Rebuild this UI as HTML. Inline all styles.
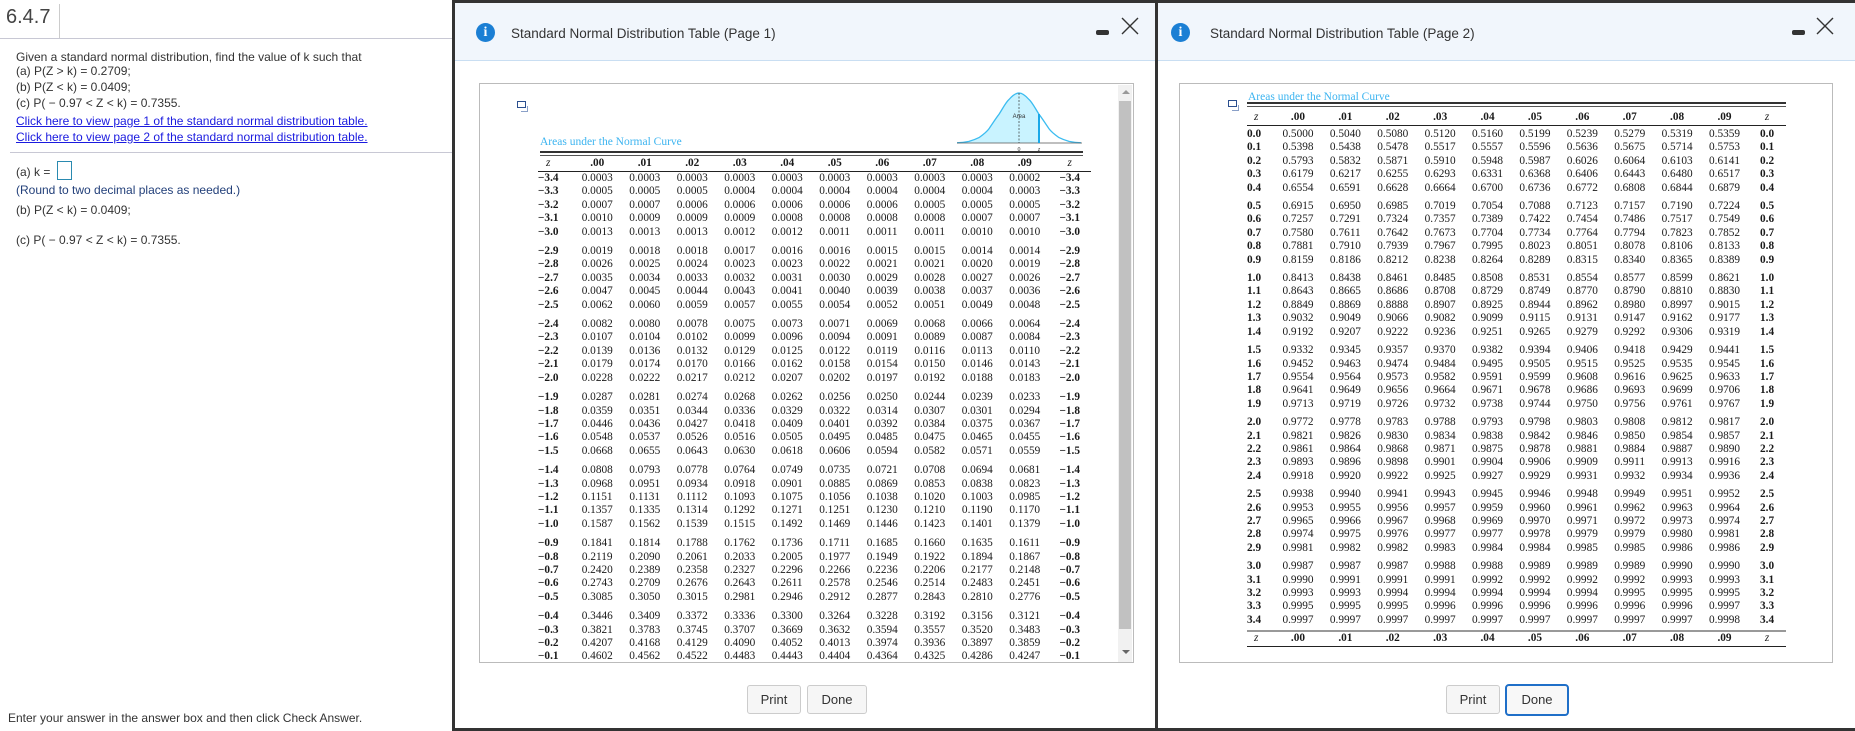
<!DOCTYPE html>
<html><head><meta charset="utf-8">
<style>
*{box-sizing:border-box;margin:0;padding:0}
body{width:1855px;height:731px;overflow:hidden;background:#fff;position:relative;font-family:"Liberation Sans",Arial,sans-serif;color:#333}
.abs{position:absolute}
.lt{position:absolute;left:16px;font-size:12px;line-height:16px;color:#333;white-space:nowrap}
a{color:#1a1adf;text-decoration:underline}
.dlg{position:absolute;top:0;height:731px;background:#fff;border:3px solid #333}
.tb{position:absolute;left:0;right:0;top:0;height:58px;background:#f1f6fc;border-bottom:1px solid #c9def2}
.ic{position:absolute;width:19px;height:19px;border-radius:50%;background:#1b7fd4;color:#fff;font:bold 14px/19px "Liberation Serif",serif;text-align:center}
.tt{position:absolute;font-size:13.5px;color:#333;white-space:nowrap}
.mn{position:absolute;width:13px;height:5px;border-radius:2px;background:#333}
.box{position:absolute;border:1px solid #bbb;background:#fff;overflow:hidden}
.btn{position:absolute;height:29px;background:#f6f6f6;border:1px solid #ccc;border-radius:3px;font-size:13px;line-height:27px;text-align:center;color:#333}
table{position:absolute;border-collapse:collapse;table-layout:fixed;font-family:"Liberation Serif","DejaVu Serif",serif;font-size:11.3px;color:#1a1a1a}
td{height:13.4px;padding:0;line-height:13.4px;text-align:center;white-space:nowrap}
tr.g td{padding-top:5px;height:18.4px;line-height:13.4px;vertical-align:bottom}
.p1 tr.g td{padding-top:6px;height:19.4px}
td.z{font-weight:bold;text-align:left}
td.zr{font-weight:bold}
tr.h td{font-weight:bold;height:15px;border-bottom:1px solid #222}
tr.h td.i{font-weight:normal;font-style:italic}
.cp{position:absolute;width:9px;height:7px;border:1.5px solid #2b4f8f}
.cp2{position:absolute;width:7px;height:6px;border:1px solid #8aa0c8;border-top:none;border-left:none}
.ar{position:absolute;font-family:"Liberation Serif",serif;font-size:11.5px;color:#3cb4f0;white-space:nowrap}
</style></head><body>

<!-- left panel -->
<div class="abs" style="left:6px;top:6px;font-size:20px;color:#444">6.4.7</div>
<div class="abs" style="left:59px;top:4px;width:1px;height:34px;background:#ccc"></div>
<div class="abs" style="left:0;top:38px;width:455px;height:1px;background:#c8c8d4"></div>
<div class="lt" style="top:49px">Given a standard normal distribution, find the value of k such that</div>
<div class="lt" style="top:63px">(a) P(Z &gt; k) = 0.2709;</div>
<div class="lt" style="top:79px">(b) P(Z &lt; k) = 0.0409;</div>
<div class="lt" style="top:95px">(c) P( − 0.97 &lt; Z &lt; k) = 0.7355.</div>
<div class="lt" style="top:113px"><a>Click here to view page 1 of the standard normal distribution table.</a></div>
<div class="lt" style="top:129px"><a>Click here to view page 2 of the standard normal distribution table.</a></div>
<div class="abs" style="left:10px;top:152px;width:445px;height:1px;background:#c8c8d4"></div>
<div class="lt" style="top:164px">(a) k =</div>
<div class="abs" style="left:57px;top:161px;width:15px;height:19px;border:1px solid #2a8ab0"></div>
<div class="lt" style="top:182px;color:#23407a">(Round to two decimal places as needed.)</div>
<div class="lt" style="top:202px">(b) P(Z &lt; k) = 0.0409;</div>
<div class="lt" style="top:232px">(c) P( − 0.97 &lt; Z &lt; k) = 0.7355.</div>
<div class="lt" style="top:710px;left:8px">Enter your answer in the answer box and then click Check Answer.</div>

<!-- dialog 1 -->
<div class="dlg" style="left:452px;width:706px;border-right:none">
 <div class="tb"></div>
 <div class="ic" style="left:21px;top:20px">i</div>
 <div class="tt" style="left:56px;top:23px">Standard Normal Distribution Table (Page 1)</div>
 <div class="mn" style="left:641px;top:27px"></div>
 <svg class="abs" style="left:666px;top:14px" width="18" height="18"><path d="M1,1 L17,17 M17,1 L1,17" stroke="#333" stroke-width="1.4"/></svg>
</div>
<div class="box" style="left:479px;top:83px;width:655px;height:580px">
 <div class="cp" style="left:37px;top:17px"></div><div class="cp2" style="left:41px;top:22px"></div>
 <div class="abs" style="left:638px;top:1px;width:14px;height:577px;background:#f1f1f1"></div>
 <div class="abs" style="left:639px;top:17px;width:12px;height:528px;background:#c1c1c1"></div>
 <div class="abs" style="left:642px;top:6px;width:0;height:0;border-left:4px solid transparent;border-right:4px solid transparent;border-bottom:4px solid #999"></div>
 <div class="abs" style="left:642px;top:566px;width:0;height:0;border-left:4px solid transparent;border-right:4px solid transparent;border-top:4px solid #666"></div>
</div>
<svg class="abs" style="left:950px;top:85px" width="140" height="70" viewBox="0 0 140 70">
 <path d="M7,57.8 C13,57.6 17,56.8 19,56.4 C24,55 27,53.6 29,52.6 C34,49 37,46.5 39,43.7 C43,38 46,33 49,29.3 C53,23 56,17 59,14.5 C63,10 66,8 69,8 C72,8 75,10 79,14.5 C82,17 85,23 89,29.3 L89,58 L7,58 Z" fill="#c9f3ff"/>
 <path d="M7,57.8 C13,57.6 17,56.8 19,56.4 C24,55 27,53.6 29,52.6 C34,49 37,46.5 39,43.7 C43,38 46,33 49,29.3 C53,23 56,17 59,14.5 C63,10 66,8 69,8 C72,8 75,10 79,14.5 C82,17 85,23 89,29.3 C92,33 95,38 99,43.7 C101,46.5 104,49 109,52.6 C111,53.6 114,55 119,56.4 C121,56.8 125,57.6 131,57.8" fill="none" stroke="#3bbcf0" stroke-width="1.3"/>
 <line x1="7" y1="58" x2="132" y2="58" stroke="#555" stroke-width="0.8"/>
 <line x1="69" y1="8" x2="69" y2="58" stroke="#333" stroke-width="0.7" stroke-dasharray="2,1.5"/>
 <line x1="89" y1="29" x2="89" y2="58" stroke="#1aa8e8" stroke-width="2"/>
 <text x="69" y="33" font-size="6" text-anchor="middle" fill="#333" font-family="Liberation Sans">Area</text>
 <text x="69" y="66" font-size="6" text-anchor="middle" fill="#333" font-family="Liberation Serif">0</text>
 <text x="89" y="66" font-size="6" text-anchor="middle" fill="#333" font-style="italic" font-family="Liberation Serif">z</text>
</svg>
<div class="ar" style="left:540px;top:136px">Areas under the Normal Curve</div>
<div class="abs" style="left:540px;top:151px;width:543px;height:2px;background:#333"></div>
<div class="abs" style="left:540px;top:155px;width:543px;height:1px;background:#555"></div>
<table class="p1" style="left:538px;top:156px;width:553px">
<colgroup><col style="width:35.5px"><col style="width:47.5px"><col style="width:47.5px"><col style="width:47.5px"><col style="width:47.5px"><col style="width:47.5px"><col style="width:47.5px"><col style="width:47.5px"><col style="width:47.5px"><col style="width:47.5px"><col style="width:47.5px"><col style="width:42.5px"></colgroup>
<tr class="h"><td class="i" style="text-align:left;padding-left:8px">z</td><td>.00</td><td>.01</td><td>.02</td><td>.03</td><td>.04</td><td>.05</td><td>.06</td><td>.07</td><td>.08</td><td>.09</td><td class="i">z</td></tr>
<tr style="height:1px"><td colspan="12" style="height:1px"></td></tr>
<tr><td class="z">−3.4</td><td>0.0003</td><td>0.0003</td><td>0.0003</td><td>0.0003</td><td>0.0003</td><td>0.0003</td><td>0.0003</td><td>0.0003</td><td>0.0003</td><td>0.0002</td><td class="zr">−3.4</td></tr>
<tr><td class="z">−3.3</td><td>0.0005</td><td>0.0005</td><td>0.0005</td><td>0.0004</td><td>0.0004</td><td>0.0004</td><td>0.0004</td><td>0.0004</td><td>0.0004</td><td>0.0003</td><td class="zr">−3.3</td></tr>
<tr><td class="z">−3.2</td><td>0.0007</td><td>0.0007</td><td>0.0006</td><td>0.0006</td><td>0.0006</td><td>0.0006</td><td>0.0006</td><td>0.0005</td><td>0.0005</td><td>0.0005</td><td class="zr">−3.2</td></tr>
<tr><td class="z">−3.1</td><td>0.0010</td><td>0.0009</td><td>0.0009</td><td>0.0009</td><td>0.0008</td><td>0.0008</td><td>0.0008</td><td>0.0008</td><td>0.0007</td><td>0.0007</td><td class="zr">−3.1</td></tr>
<tr><td class="z">−3.0</td><td>0.0013</td><td>0.0013</td><td>0.0013</td><td>0.0012</td><td>0.0012</td><td>0.0011</td><td>0.0011</td><td>0.0011</td><td>0.0010</td><td>0.0010</td><td class="zr">−3.0</td></tr>
<tr class="g"><td class="z">−2.9</td><td>0.0019</td><td>0.0018</td><td>0.0018</td><td>0.0017</td><td>0.0016</td><td>0.0016</td><td>0.0015</td><td>0.0015</td><td>0.0014</td><td>0.0014</td><td class="zr">−2.9</td></tr>
<tr><td class="z">−2.8</td><td>0.0026</td><td>0.0025</td><td>0.0024</td><td>0.0023</td><td>0.0023</td><td>0.0022</td><td>0.0021</td><td>0.0021</td><td>0.0020</td><td>0.0019</td><td class="zr">−2.8</td></tr>
<tr><td class="z">−2.7</td><td>0.0035</td><td>0.0034</td><td>0.0033</td><td>0.0032</td><td>0.0031</td><td>0.0030</td><td>0.0029</td><td>0.0028</td><td>0.0027</td><td>0.0026</td><td class="zr">−2.7</td></tr>
<tr><td class="z">−2.6</td><td>0.0047</td><td>0.0045</td><td>0.0044</td><td>0.0043</td><td>0.0041</td><td>0.0040</td><td>0.0039</td><td>0.0038</td><td>0.0037</td><td>0.0036</td><td class="zr">−2.6</td></tr>
<tr><td class="z">−2.5</td><td>0.0062</td><td>0.0060</td><td>0.0059</td><td>0.0057</td><td>0.0055</td><td>0.0054</td><td>0.0052</td><td>0.0051</td><td>0.0049</td><td>0.0048</td><td class="zr">−2.5</td></tr>
<tr class="g"><td class="z">−2.4</td><td>0.0082</td><td>0.0080</td><td>0.0078</td><td>0.0075</td><td>0.0073</td><td>0.0071</td><td>0.0069</td><td>0.0068</td><td>0.0066</td><td>0.0064</td><td class="zr">−2.4</td></tr>
<tr><td class="z">−2.3</td><td>0.0107</td><td>0.0104</td><td>0.0102</td><td>0.0099</td><td>0.0096</td><td>0.0094</td><td>0.0091</td><td>0.0089</td><td>0.0087</td><td>0.0084</td><td class="zr">−2.3</td></tr>
<tr><td class="z">−2.2</td><td>0.0139</td><td>0.0136</td><td>0.0132</td><td>0.0129</td><td>0.0125</td><td>0.0122</td><td>0.0119</td><td>0.0116</td><td>0.0113</td><td>0.0110</td><td class="zr">−2.2</td></tr>
<tr><td class="z">−2.1</td><td>0.0179</td><td>0.0174</td><td>0.0170</td><td>0.0166</td><td>0.0162</td><td>0.0158</td><td>0.0154</td><td>0.0150</td><td>0.0146</td><td>0.0143</td><td class="zr">−2.1</td></tr>
<tr><td class="z">−2.0</td><td>0.0228</td><td>0.0222</td><td>0.0217</td><td>0.0212</td><td>0.0207</td><td>0.0202</td><td>0.0197</td><td>0.0192</td><td>0.0188</td><td>0.0183</td><td class="zr">−2.0</td></tr>
<tr class="g"><td class="z">−1.9</td><td>0.0287</td><td>0.0281</td><td>0.0274</td><td>0.0268</td><td>0.0262</td><td>0.0256</td><td>0.0250</td><td>0.0244</td><td>0.0239</td><td>0.0233</td><td class="zr">−1.9</td></tr>
<tr><td class="z">−1.8</td><td>0.0359</td><td>0.0351</td><td>0.0344</td><td>0.0336</td><td>0.0329</td><td>0.0322</td><td>0.0314</td><td>0.0307</td><td>0.0301</td><td>0.0294</td><td class="zr">−1.8</td></tr>
<tr><td class="z">−1.7</td><td>0.0446</td><td>0.0436</td><td>0.0427</td><td>0.0418</td><td>0.0409</td><td>0.0401</td><td>0.0392</td><td>0.0384</td><td>0.0375</td><td>0.0367</td><td class="zr">−1.7</td></tr>
<tr><td class="z">−1.6</td><td>0.0548</td><td>0.0537</td><td>0.0526</td><td>0.0516</td><td>0.0505</td><td>0.0495</td><td>0.0485</td><td>0.0475</td><td>0.0465</td><td>0.0455</td><td class="zr">−1.6</td></tr>
<tr><td class="z">−1.5</td><td>0.0668</td><td>0.0655</td><td>0.0643</td><td>0.0630</td><td>0.0618</td><td>0.0606</td><td>0.0594</td><td>0.0582</td><td>0.0571</td><td>0.0559</td><td class="zr">−1.5</td></tr>
<tr class="g"><td class="z">−1.4</td><td>0.0808</td><td>0.0793</td><td>0.0778</td><td>0.0764</td><td>0.0749</td><td>0.0735</td><td>0.0721</td><td>0.0708</td><td>0.0694</td><td>0.0681</td><td class="zr">−1.4</td></tr>
<tr><td class="z">−1.3</td><td>0.0968</td><td>0.0951</td><td>0.0934</td><td>0.0918</td><td>0.0901</td><td>0.0885</td><td>0.0869</td><td>0.0853</td><td>0.0838</td><td>0.0823</td><td class="zr">−1.3</td></tr>
<tr><td class="z">−1.2</td><td>0.1151</td><td>0.1131</td><td>0.1112</td><td>0.1093</td><td>0.1075</td><td>0.1056</td><td>0.1038</td><td>0.1020</td><td>0.1003</td><td>0.0985</td><td class="zr">−1.2</td></tr>
<tr><td class="z">−1.1</td><td>0.1357</td><td>0.1335</td><td>0.1314</td><td>0.1292</td><td>0.1271</td><td>0.1251</td><td>0.1230</td><td>0.1210</td><td>0.1190</td><td>0.1170</td><td class="zr">−1.1</td></tr>
<tr><td class="z">−1.0</td><td>0.1587</td><td>0.1562</td><td>0.1539</td><td>0.1515</td><td>0.1492</td><td>0.1469</td><td>0.1446</td><td>0.1423</td><td>0.1401</td><td>0.1379</td><td class="zr">−1.0</td></tr>
<tr class="g"><td class="z">−0.9</td><td>0.1841</td><td>0.1814</td><td>0.1788</td><td>0.1762</td><td>0.1736</td><td>0.1711</td><td>0.1685</td><td>0.1660</td><td>0.1635</td><td>0.1611</td><td class="zr">−0.9</td></tr>
<tr><td class="z">−0.8</td><td>0.2119</td><td>0.2090</td><td>0.2061</td><td>0.2033</td><td>0.2005</td><td>0.1977</td><td>0.1949</td><td>0.1922</td><td>0.1894</td><td>0.1867</td><td class="zr">−0.8</td></tr>
<tr><td class="z">−0.7</td><td>0.2420</td><td>0.2389</td><td>0.2358</td><td>0.2327</td><td>0.2296</td><td>0.2266</td><td>0.2236</td><td>0.2206</td><td>0.2177</td><td>0.2148</td><td class="zr">−0.7</td></tr>
<tr><td class="z">−0.6</td><td>0.2743</td><td>0.2709</td><td>0.2676</td><td>0.2643</td><td>0.2611</td><td>0.2578</td><td>0.2546</td><td>0.2514</td><td>0.2483</td><td>0.2451</td><td class="zr">−0.6</td></tr>
<tr><td class="z">−0.5</td><td>0.3085</td><td>0.3050</td><td>0.3015</td><td>0.2981</td><td>0.2946</td><td>0.2912</td><td>0.2877</td><td>0.2843</td><td>0.2810</td><td>0.2776</td><td class="zr">−0.5</td></tr>
<tr class="g"><td class="z">−0.4</td><td>0.3446</td><td>0.3409</td><td>0.3372</td><td>0.3336</td><td>0.3300</td><td>0.3264</td><td>0.3228</td><td>0.3192</td><td>0.3156</td><td>0.3121</td><td class="zr">−0.4</td></tr>
<tr><td class="z">−0.3</td><td>0.3821</td><td>0.3783</td><td>0.3745</td><td>0.3707</td><td>0.3669</td><td>0.3632</td><td>0.3594</td><td>0.3557</td><td>0.3520</td><td>0.3483</td><td class="zr">−0.3</td></tr>
<tr><td class="z">−0.2</td><td>0.4207</td><td>0.4168</td><td>0.4129</td><td>0.4090</td><td>0.4052</td><td>0.4013</td><td>0.3974</td><td>0.3936</td><td>0.3897</td><td>0.3859</td><td class="zr">−0.2</td></tr>
<tr><td class="z">−0.1</td><td>0.4602</td><td>0.4562</td><td>0.4522</td><td>0.4483</td><td>0.4443</td><td>0.4404</td><td>0.4364</td><td>0.4325</td><td>0.4286</td><td>0.4247</td><td class="zr">−0.1</td></tr>
</table>
<div class="btn" style="left:747px;top:685px;width:54px">Print</div>
<div class="btn" style="left:807px;top:685px;width:60px">Done</div>

<!-- dialog 2 -->
<div class="dlg" style="left:1155px;width:700px;border-right:none">
 <div class="tb"></div>
 <div class="ic" style="left:13px;top:20px">i</div>
 <div class="tt" style="left:52px;top:23px">Standard Normal Distribution Table (Page 2)</div>
 <div class="mn" style="left:634px;top:27px"></div>
 <svg class="abs" style="left:658px;top:14px" width="18" height="18"><path d="M1,1 L17,17 M17,1 L1,17" stroke="#333" stroke-width="1.4"/></svg>
</div>
<div class="box" style="left:1179px;top:83px;width:654px;height:580px">
 <div class="cp" style="left:48px;top:16px"></div><div class="cp2" style="left:52px;top:21px"></div>
</div>
<div class="ar" style="left:1248px;top:91px">Areas under the Normal Curve</div>
<div class="abs" style="left:1247px;top:102px;width:539px;height:2px;background:#333"></div>
<div class="abs" style="left:1247px;top:106px;width:539px;height:1px;background:#555"></div>
<table style="left:1247px;top:110px;width:539px">
<colgroup><col style="width:27.3px"><col style="width:47.4px"><col style="width:47.4px"><col style="width:47.4px"><col style="width:47.4px"><col style="width:47.4px"><col style="width:47.4px"><col style="width:47.4px"><col style="width:47.4px"><col style="width:47.4px"><col style="width:47.4px"><col style="width:37.7px"></colgroup>
<tr class="h"><td class="i" style="text-align:left;padding-left:7px">z</td><td>.00</td><td>.01</td><td>.02</td><td>.03</td><td>.04</td><td>.05</td><td>.06</td><td>.07</td><td>.08</td><td>.09</td><td class="i">z</td></tr>
<tr><td colspan="12" style="height:3px"></td></tr>
<tr><td class="z">0.0</td><td>0.5000</td><td>0.5040</td><td>0.5080</td><td>0.5120</td><td>0.5160</td><td>0.5199</td><td>0.5239</td><td>0.5279</td><td>0.5319</td><td>0.5359</td><td class="zr">0.0</td></tr>
<tr><td class="z">0.1</td><td>0.5398</td><td>0.5438</td><td>0.5478</td><td>0.5517</td><td>0.5557</td><td>0.5596</td><td>0.5636</td><td>0.5675</td><td>0.5714</td><td>0.5753</td><td class="zr">0.1</td></tr>
<tr><td class="z">0.2</td><td>0.5793</td><td>0.5832</td><td>0.5871</td><td>0.5910</td><td>0.5948</td><td>0.5987</td><td>0.6026</td><td>0.6064</td><td>0.6103</td><td>0.6141</td><td class="zr">0.2</td></tr>
<tr><td class="z">0.3</td><td>0.6179</td><td>0.6217</td><td>0.6255</td><td>0.6293</td><td>0.6331</td><td>0.6368</td><td>0.6406</td><td>0.6443</td><td>0.6480</td><td>0.6517</td><td class="zr">0.3</td></tr>
<tr><td class="z">0.4</td><td>0.6554</td><td>0.6591</td><td>0.6628</td><td>0.6664</td><td>0.6700</td><td>0.6736</td><td>0.6772</td><td>0.6808</td><td>0.6844</td><td>0.6879</td><td class="zr">0.4</td></tr>
<tr class="g"><td class="z">0.5</td><td>0.6915</td><td>0.6950</td><td>0.6985</td><td>0.7019</td><td>0.7054</td><td>0.7088</td><td>0.7123</td><td>0.7157</td><td>0.7190</td><td>0.7224</td><td class="zr">0.5</td></tr>
<tr><td class="z">0.6</td><td>0.7257</td><td>0.7291</td><td>0.7324</td><td>0.7357</td><td>0.7389</td><td>0.7422</td><td>0.7454</td><td>0.7486</td><td>0.7517</td><td>0.7549</td><td class="zr">0.6</td></tr>
<tr><td class="z">0.7</td><td>0.7580</td><td>0.7611</td><td>0.7642</td><td>0.7673</td><td>0.7704</td><td>0.7734</td><td>0.7764</td><td>0.7794</td><td>0.7823</td><td>0.7852</td><td class="zr">0.7</td></tr>
<tr><td class="z">0.8</td><td>0.7881</td><td>0.7910</td><td>0.7939</td><td>0.7967</td><td>0.7995</td><td>0.8023</td><td>0.8051</td><td>0.8078</td><td>0.8106</td><td>0.8133</td><td class="zr">0.8</td></tr>
<tr><td class="z">0.9</td><td>0.8159</td><td>0.8186</td><td>0.8212</td><td>0.8238</td><td>0.8264</td><td>0.8289</td><td>0.8315</td><td>0.8340</td><td>0.8365</td><td>0.8389</td><td class="zr">0.9</td></tr>
<tr class="g"><td class="z">1.0</td><td>0.8413</td><td>0.8438</td><td>0.8461</td><td>0.8485</td><td>0.8508</td><td>0.8531</td><td>0.8554</td><td>0.8577</td><td>0.8599</td><td>0.8621</td><td class="zr">1.0</td></tr>
<tr><td class="z">1.1</td><td>0.8643</td><td>0.8665</td><td>0.8686</td><td>0.8708</td><td>0.8729</td><td>0.8749</td><td>0.8770</td><td>0.8790</td><td>0.8810</td><td>0.8830</td><td class="zr">1.1</td></tr>
<tr><td class="z">1.2</td><td>0.8849</td><td>0.8869</td><td>0.8888</td><td>0.8907</td><td>0.8925</td><td>0.8944</td><td>0.8962</td><td>0.8980</td><td>0.8997</td><td>0.9015</td><td class="zr">1.2</td></tr>
<tr><td class="z">1.3</td><td>0.9032</td><td>0.9049</td><td>0.9066</td><td>0.9082</td><td>0.9099</td><td>0.9115</td><td>0.9131</td><td>0.9147</td><td>0.9162</td><td>0.9177</td><td class="zr">1.3</td></tr>
<tr><td class="z">1.4</td><td>0.9192</td><td>0.9207</td><td>0.9222</td><td>0.9236</td><td>0.9251</td><td>0.9265</td><td>0.9279</td><td>0.9292</td><td>0.9306</td><td>0.9319</td><td class="zr">1.4</td></tr>
<tr class="g"><td class="z">1.5</td><td>0.9332</td><td>0.9345</td><td>0.9357</td><td>0.9370</td><td>0.9382</td><td>0.9394</td><td>0.9406</td><td>0.9418</td><td>0.9429</td><td>0.9441</td><td class="zr">1.5</td></tr>
<tr><td class="z">1.6</td><td>0.9452</td><td>0.9463</td><td>0.9474</td><td>0.9484</td><td>0.9495</td><td>0.9505</td><td>0.9515</td><td>0.9525</td><td>0.9535</td><td>0.9545</td><td class="zr">1.6</td></tr>
<tr><td class="z">1.7</td><td>0.9554</td><td>0.9564</td><td>0.9573</td><td>0.9582</td><td>0.9591</td><td>0.9599</td><td>0.9608</td><td>0.9616</td><td>0.9625</td><td>0.9633</td><td class="zr">1.7</td></tr>
<tr><td class="z">1.8</td><td>0.9641</td><td>0.9649</td><td>0.9656</td><td>0.9664</td><td>0.9671</td><td>0.9678</td><td>0.9686</td><td>0.9693</td><td>0.9699</td><td>0.9706</td><td class="zr">1.8</td></tr>
<tr><td class="z">1.9</td><td>0.9713</td><td>0.9719</td><td>0.9726</td><td>0.9732</td><td>0.9738</td><td>0.9744</td><td>0.9750</td><td>0.9756</td><td>0.9761</td><td>0.9767</td><td class="zr">1.9</td></tr>
<tr class="g"><td class="z">2.0</td><td>0.9772</td><td>0.9778</td><td>0.9783</td><td>0.9788</td><td>0.9793</td><td>0.9798</td><td>0.9803</td><td>0.9808</td><td>0.9812</td><td>0.9817</td><td class="zr">2.0</td></tr>
<tr><td class="z">2.1</td><td>0.9821</td><td>0.9826</td><td>0.9830</td><td>0.9834</td><td>0.9838</td><td>0.9842</td><td>0.9846</td><td>0.9850</td><td>0.9854</td><td>0.9857</td><td class="zr">2.1</td></tr>
<tr><td class="z">2.2</td><td>0.9861</td><td>0.9864</td><td>0.9868</td><td>0.9871</td><td>0.9875</td><td>0.9878</td><td>0.9881</td><td>0.9884</td><td>0.9887</td><td>0.9890</td><td class="zr">2.2</td></tr>
<tr><td class="z">2.3</td><td>0.9893</td><td>0.9896</td><td>0.9898</td><td>0.9901</td><td>0.9904</td><td>0.9906</td><td>0.9909</td><td>0.9911</td><td>0.9913</td><td>0.9916</td><td class="zr">2.3</td></tr>
<tr><td class="z">2.4</td><td>0.9918</td><td>0.9920</td><td>0.9922</td><td>0.9925</td><td>0.9927</td><td>0.9929</td><td>0.9931</td><td>0.9932</td><td>0.9934</td><td>0.9936</td><td class="zr">2.4</td></tr>
<tr class="g"><td class="z">2.5</td><td>0.9938</td><td>0.9940</td><td>0.9941</td><td>0.9943</td><td>0.9945</td><td>0.9946</td><td>0.9948</td><td>0.9949</td><td>0.9951</td><td>0.9952</td><td class="zr">2.5</td></tr>
<tr><td class="z">2.6</td><td>0.9953</td><td>0.9955</td><td>0.9956</td><td>0.9957</td><td>0.9959</td><td>0.9960</td><td>0.9961</td><td>0.9962</td><td>0.9963</td><td>0.9964</td><td class="zr">2.6</td></tr>
<tr><td class="z">2.7</td><td>0.9965</td><td>0.9966</td><td>0.9967</td><td>0.9968</td><td>0.9969</td><td>0.9970</td><td>0.9971</td><td>0.9972</td><td>0.9973</td><td>0.9974</td><td class="zr">2.7</td></tr>
<tr><td class="z">2.8</td><td>0.9974</td><td>0.9975</td><td>0.9976</td><td>0.9977</td><td>0.9977</td><td>0.9978</td><td>0.9979</td><td>0.9979</td><td>0.9980</td><td>0.9981</td><td class="zr">2.8</td></tr>
<tr><td class="z">2.9</td><td>0.9981</td><td>0.9982</td><td>0.9982</td><td>0.9983</td><td>0.9984</td><td>0.9984</td><td>0.9985</td><td>0.9985</td><td>0.9986</td><td>0.9986</td><td class="zr">2.9</td></tr>
<tr class="g"><td class="z">3.0</td><td>0.9987</td><td>0.9987</td><td>0.9987</td><td>0.9988</td><td>0.9988</td><td>0.9989</td><td>0.9989</td><td>0.9989</td><td>0.9990</td><td>0.9990</td><td class="zr">3.0</td></tr>
<tr><td class="z">3.1</td><td>0.9990</td><td>0.9991</td><td>0.9991</td><td>0.9991</td><td>0.9992</td><td>0.9992</td><td>0.9992</td><td>0.9992</td><td>0.9993</td><td>0.9993</td><td class="zr">3.1</td></tr>
<tr><td class="z">3.2</td><td>0.9993</td><td>0.9993</td><td>0.9994</td><td>0.9994</td><td>0.9994</td><td>0.9994</td><td>0.9994</td><td>0.9995</td><td>0.9995</td><td>0.9995</td><td class="zr">3.2</td></tr>
<tr><td class="z">3.3</td><td>0.9995</td><td>0.9995</td><td>0.9995</td><td>0.9996</td><td>0.9996</td><td>0.9996</td><td>0.9996</td><td>0.9996</td><td>0.9996</td><td>0.9997</td><td class="zr">3.3</td></tr>
<tr><td class="z">3.4</td><td>0.9997</td><td>0.9997</td><td>0.9997</td><td>0.9997</td><td>0.9997</td><td>0.9997</td><td>0.9997</td><td>0.9997</td><td>0.9997</td><td>0.9998</td><td class="zr">3.4</td></tr>
<tr><td colspan="12" style="height:4px;border-bottom:2px solid #999"></td></tr>
<tr class="h"><td class="i" style="text-align:left;padding-left:7px">z</td><td>.00</td><td>.01</td><td>.02</td><td>.03</td><td>.04</td><td>.05</td><td>.06</td><td>.07</td><td>.08</td><td>.09</td><td class="i">z</td></tr>
</table>
<div class="btn" style="left:1446px;top:685px;width:54px">Print</div>
<div class="btn" style="left:1505px;top:684px;width:64px;height:32px;border:2px solid #1f6fc8;border-radius:4px;background:#f8f8f8;line-height:28px">Done</div>

</body></html>
